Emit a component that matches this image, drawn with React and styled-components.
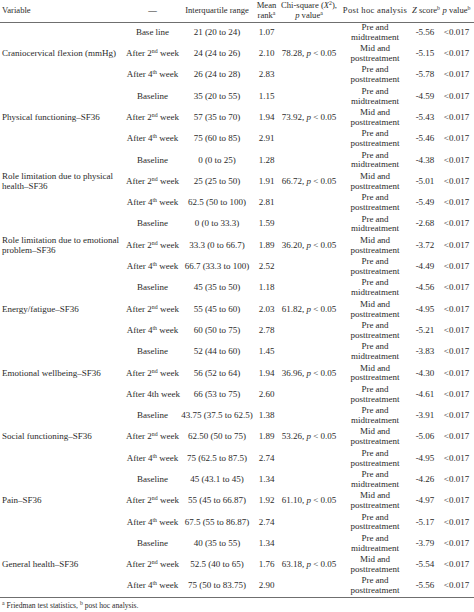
import React from "react";
import styled, { createGlobalStyle } from "styled-components";

const Global = createGlobalStyle`
  html, body { margin: 0; padding: 0; background: #fff; }
  body { font-family: "Liberation Serif", "Times New Roman", serif; color: #2b2b2b; }
`;

const Page = styled.div`
  width: 474px;
  height: 612px;
  overflow: hidden;
  background: #fff;
`;

const Table = styled.table`
  width: 474px;
  border-collapse: collapse;
  table-layout: fixed;
  font-size: 9px;
  line-height: 9.8px;
`;

const HeadRow = styled.tr`
  height: 22px;
  border-bottom: 1.5px solid #6f6f6f;
`;

const Th = styled.th`
  font-weight: normal;
  font-size: 8.6px;
  padding: 0 1px;
  vertical-align: middle;
  text-align: ${(p) => p.$align || "center"};
  padding-left: ${(p) => (p.$align === "left" ? "2px" : "1px")};
  white-space: ${(p) => (p.$nowrap ? "nowrap" : "normal")};
  letter-spacing: ${(p) => p.$spacing || "0"};
`;

const Body = styled.tbody`
  border-bottom: 1.5px solid #6f6f6f;
`;

const Row = styled.tr`
  height: 21.3px;
`;

const Td = styled.td`
  padding: 0 1px;
  vertical-align: middle;
  text-align: ${(p) => p.$align || "center"};
  padding-left: ${(p) => (p.$align === "left" ? "2px" : "1px")};
  padding-right: ${(p) => (p.$align === "left" ? "3px" : "1px")};
  white-space: ${(p) => (p.$nowrap ? "nowrap" : "normal")};
`;

const Sup = styled.sup`
  font-size: 5.8px;
  line-height: 0;
  vertical-align: 3px;
`;

const I = styled.i`
  font-style: italic;
`;

const Foot = styled.div`
  font-size: 7.6px;
  padding: 3px 0 0 2px;
  line-height: 9px;
`;

const groups = [
  {
    name: "Craniocervical flexion (mmHg)",
    chi: "78.28",
    first: "Base line",
    rows: [
      ["21 (20 to 24)", "1.07", "-5.56"],
      ["24 (24 to 26)", "2.10", "-5.15"],
      ["26 (24 to 28)", "2.83", "-5.78"],
    ],
  },
  {
    name: "Physical functioning–SF36",
    chi: "73.92",
    rows: [
      ["35 (20 to 55)", "1.15", "-4.59"],
      ["57 (35 to 70)", "1.94", "-5.43"],
      ["75 (60 to 85)", "2.91", "-5.46"],
    ],
  },
  {
    name: "Role limitation due to physical health–SF36",
    chi: "66.72",
    rows: [
      ["0 (0 to 25)", "1.28", "-4.38"],
      ["25 (25 to 50)", "1.91", "-5.01"],
      ["62.5 (50 to 100)", "2.81", "-5.49"],
    ],
  },
  {
    name: "Role limitation due to emotional problem–SF36",
    chi: "36.20",
    rows: [
      ["0 (0 to 33.3)", "1.59", "-2.68"],
      ["33.3 (0 to 66.7)", "1.89", "-3.72"],
      ["66.7 (33.3 to 100)", "2.52", "-4.49"],
    ],
  },
  {
    name: "Energy/fatigue–SF36",
    chi: "61.82",
    rows: [
      ["45 (35 to 50)", "1.18", "-4.56"],
      ["55 (45 to 60)", "2.03", "-4.95"],
      ["60 (50 to 75)", "2.78", "-5.21"],
    ],
  },
  {
    name: "Emotional wellbeing–SF36",
    chi: "36.96",
    plain4th: true,
    rows: [
      ["52 (44 to 60)", "1.45", "-3.83"],
      ["56 (52 to 64)", "1.94", "-4.30"],
      ["66 (53 to 75)", "2.60", "-4.61"],
    ],
  },
  {
    name: "Social functioning–SF36",
    chi: "53.26",
    rows: [
      ["43.75 (37.5 to 62.5)", "1.38", "-3.91"],
      ["62.50 (50 to 75)", "1.89", "-5.06"],
      ["75 (62.5 to 87.5)", "2.74", "-4.95"],
    ],
  },
  {
    name: "Pain–SF36",
    chi: "61.10",
    rows: [
      ["45 (43.1 to 45)", "1.34", "-4.26"],
      ["55 (45 to 66.87)", "1.92", "-4.97"],
      ["67.5 (55 to 86.87)", "2.74", "-5.17"],
    ],
  },
  {
    name: "General health–SF36",
    chi: "63.18",
    rows: [
      ["40 (35 to 55)", "1.34", "-3.79"],
      ["52.5 (40 to 65)", "1.76", "-5.54"],
      ["75 (50 to 83.75)", "2.90", "-5.56"],
    ],
  },
];

const posthoc = [
  ["Pre and", "midtreatment"],
  ["Mid and", "posttreatment"],
  ["Pre and", "posttreatment"],
];

function TimeLabel({ i, g }) {
  if (i === 0) return <>{g.first || "Baseline"}</>;
  if (i === 1)
    return (
      <>
        After 2<Sup>nd</Sup> week
      </>
    );
  if (g.plain4th) return <>After 4th week</>;
  return (
    <>
      After 4<Sup>th</Sup> week
    </>
  );
}

export default function App() {
  return (
    <Page>
      <Global />
      <Table>
        <colgroup>
          <col style={{ width: 125 }} />
          <col style={{ width: 55 }} />
          <col style={{ width: 74 }} />
          <col style={{ width: 25 }} />
          <col style={{ width: 60 }} />
          <col style={{ width: 72 }} />
          <col style={{ width: 28 }} />
          <col style={{ width: 35 }} />
        </colgroup>
        <thead>
          <HeadRow>
            <Th $align="left">Variable</Th>
            <Th>—</Th>
            <Th $nowrap>Interquartile range</Th>
            <Th>
              Mean
              <br />
              rank<Sup>a</Sup>
            </Th>
            <Th $nowrap>
              Chi-square (<I>X</I>
              <Sup>2</Sup>),
              <br />
              <I>p</I> value<Sup>a</Sup>
            </Th>
            <Th $nowrap $spacing="0.3px">Post hoc analysis</Th>
            <Th $nowrap>
              <I>Z</I> score<Sup>b</Sup>
            </Th>
            <Th $nowrap>
              <I>p</I> value<Sup>b</Sup>
            </Th>
          </HeadRow>
        </thead>
        <Body>
          {groups.map((g, gi) =>
            g.rows.map((r, i) => (
              <Row key={`${gi}-${i}`}>
                {i === 0 && (
                  <Td $align="left" rowSpan={3}>
                    {g.name}
                  </Td>
                )}
                <Td $nowrap>
                  <TimeLabel i={i} g={g} />
                </Td>
                <Td $nowrap>{r[0]}</Td>
                <Td>{r[1]}</Td>
                {i === 0 && (
                  <Td rowSpan={3} $nowrap>
                    {g.chi}, <I>p</I> &lt; 0.05
                  </Td>
                )}
                <Td>
                  {posthoc[i][0]}
                  <br />
                  {posthoc[i][1]}
                </Td>
                <Td>{r[2]}</Td>
                <Td>&lt;0.017</Td>
              </Row>
            ))
          )}
        </Body>
      </Table>
      <Foot>
        <Sup>a</Sup> Friedman test statistics, <Sup>b</Sup> post hoc analysis.
      </Foot>
    </Page>
  );
}
